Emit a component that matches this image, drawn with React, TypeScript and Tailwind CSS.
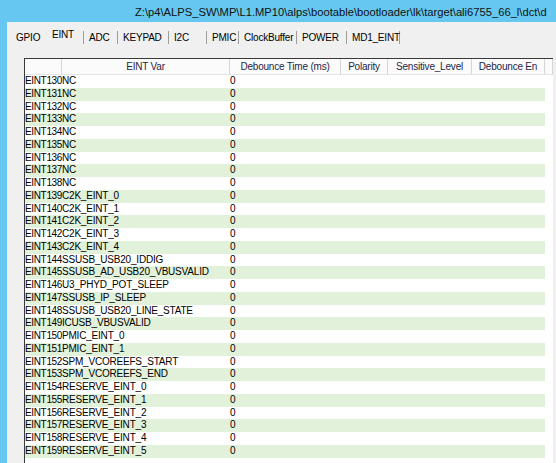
import { FC, ReactElement } from "react";

interface IEintRow {
  num: number;
  name: string;
}

const TITLE =
  "Z:\\p4\\ALPS_SW\\MP\\L1.MP10\\alps\\bootable\\bootloader\\lk\\target\\ali6755_66_l\\dct\\d";

const TABS: { label: string; width: string }[] = [
  { label: "GPIO", width: "w-[36px]" },
  { label: "EINT", width: "w-[37px]" },
  { label: "ADC", width: "w-[34px]" },
  { label: "KEYPAD", width: "w-[51px]" },
  { label: "I2C", width: "w-[38px]" },
  { label: "PMIC", width: "w-[32px]" },
  { label: "ClockBuffer", width: "w-[58px]" },
  { label: "POWER", width: "w-[50px]" },
  { label: "MD1_EINT", width: "w-[53px]" },
];

const NAMES: string[] = [
  "NC",
  "NC",
  "NC",
  "NC",
  "NC",
  "NC",
  "NC",
  "NC",
  "NC",
  "C2K_EINT_0",
  "C2K_EINT_1",
  "C2K_EINT_2",
  "C2K_EINT_3",
  "C2K_EINT_4",
  "SSUSB_USB20_IDDIG",
  "SSUSB_AD_USB20_VBUSVALID",
  "U3_PHYD_POT_SLEEP",
  "SSUSB_IP_SLEEP",
  "SSUSB_USB20_LINE_STATE",
  "ICUSB_VBUSVALID",
  "PMIC_EINT_0",
  "PMIC_EINT_1",
  "SPM_VCOREEFS_START",
  "SPM_VCOREEFS_END",
  "RESERVE_EINT_0",
  "RESERVE_EINT_1",
  "RESERVE_EINT_2",
  "RESERVE_EINT_3",
  "RESERVE_EINT_4",
  "RESERVE_EINT_5",
];

const ROWS: IEintRow[] = NAMES.map((name, i) => ({ num: 130 + i, name }));

const App: FC = (): ReactElement => {
  return (
    <div className="flex h-[463px] w-[556px] flex-col overflow-hidden bg-[#66c8f0] font-['Liberation_Sans',Arial,sans-serif] text-[10px] tracking-[-0.2px] text-black">
      {/* title bar */}
      <div className="flex h-[22px] shrink-0 items-center whitespace-nowrap pl-[135px] pt-[2px] text-[11.2px] tracking-normal text-[#111]">
        {TITLE}
      </div>

      <div className="ml-[7px] flex min-h-0 flex-1 flex-col bg-[#f0f0f0]">
        {/* tabs */}
        <div className="ml-[4px] mt-[9px] flex h-[13px]">
          {TABS.map((tab) => {
            const selected = tab.label === "EINT";
            return (
              <div
                key={tab.label}
                className={`${tab.width} flex items-center pl-[5px] leading-none ${
                  tab.label === "GPIO"
                    ? ""
                    : "border-r border-[#9c9c9c]"
                } ${selected ? "pb-[5px]" : "pt-[1px]"}`}
              >
                {tab.label}
              </div>
            );
          })}
        </div>

        {/* grid */}
        <div className="ml-[17px] mt-[14px] flex w-[529px] min-h-0 flex-1 flex-col border-l border-t border-[#3a3a3a] bg-white">
          <div className="flex h-[16px] shrink-0 border-b border-[#e4e4e4] bg-[#fbfbfb] leading-[15px] text-[#1f2747]">
            <div className="w-[37px] border-r border-[#d6d6d6]" />
            <div className="w-[168px] border-r border-[#d6d6d6] text-center">
              EINT Var
            </div>
            <div className="w-[111px] border-r border-[#d6d6d6] text-center">
              Debounce Time (ms)
            </div>
            <div className="w-[47px] border-r border-[#d6d6d6] text-center">
              Polarity
            </div>
            <div className="w-[84px] border-r border-[#d6d6d6] text-center">
              Sensitive_Level
            </div>
            <div className="w-[73px] border-r border-[#d6d6d6] text-center">
              Debounce En
            </div>
            <div className="flex-1 border-r border-[#d6d6d6]" />
          </div>

          {ROWS.map((row, i) => (
            <div key={row.num} className="flex h-[12.76px] shrink-0">
              <div
                className={`flex w-[520px] leading-[12.76px] ${
                  i % 2 === 1 ? "bg-[#e2f1da]" : "bg-white"
                }`}
              >
                <div className="w-[37px] whitespace-nowrap tracking-[-0.35px]">
                  EINT{row.num}
                </div>
                <div className="w-[168px] overflow-hidden whitespace-nowrap">
                  {row.name}
                </div>
                <div className="w-[111px]">0</div>
                <div className="w-[47px]" />
                <div className="w-[84px]" />
                <div className="w-[73px]" />
              </div>
            </div>
          ))}
        </div>
      </div>
    </div>
  );
};

export default App;
